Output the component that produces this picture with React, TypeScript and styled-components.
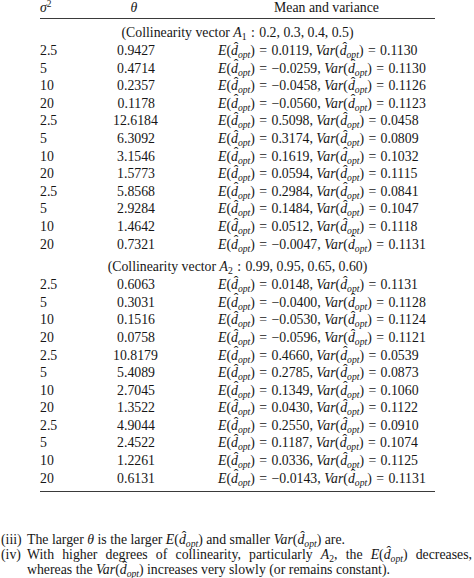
import React from 'react';
import styled, { createGlobalStyle } from 'styled-components';

const GlobalStyle = createGlobalStyle`
  html, body {
    margin: 0;
    padding: 0;
    background: #ffffff;
  }
  body {
    width: 474px;
    height: 578px;
    overflow: hidden;
    font-family: 'Liberation Serif', 'Times New Roman', serif;
    font-size: 13.8px;
    color: #161616;
  }
`;

const Page = styled.div`
  width: 474px;
  height: 578px;
  display: flex;
  flex-direction: column;
`;

const Table = styled.table`
  margin-left: 40px;
  width: 395px;
  border-collapse: collapse;
  table-layout: fixed;
  border-bottom: 1.5px solid #3a3a3a;
`;

const Col = styled.col<{ $w: number }>`
  width: ${(p) => p.$w}px;
`;

const HeadCell = styled.th<{ $align?: 'left' | 'center' | 'right'; $pad?: number }>`
  font-weight: normal;
  text-align: ${(p) => p.$align ?? 'left'};
  line-height: 16px;
  padding: 0 0 2px ${(p) => p.$pad ?? 0}px;
  border-bottom: 1.5px solid #3a3a3a;
  white-space: nowrap;
`;

const GroupCell = styled.td`
  text-align: center;
  line-height: 18px;
  padding: 5px 0 0;
  white-space: nowrap;
`;

const Cell = styled.td<{ $align?: 'left' | 'right'; $pad?: number; $last?: boolean }>`
  text-align: ${(p) => p.$align ?? 'left'};
  height: 17.6px;
  line-height: 17.6px;
  padding: 0 0 ${(p) => (p.$last ? 4 : 0)}px ${(p) => p.$pad ?? 0}px;
  white-space: nowrap;
  vertical-align: top;
`;

const It = styled.span`
  font-style: italic;
`;

const Sup = styled.sup`
  font-size: 0.68em;
  line-height: 0;
  vertical-align: 0.5em;
`;

const Sub = styled.sub<{ $italic?: boolean }>`
  font-size: 0.7em;
  line-height: 0;
  vertical-align: -0.34em;
  font-style: ${(p) => (p.$italic ? 'italic' : 'normal')};
`;

/* the circumflex sits over the italic d */
const Hat = styled.span`
  position: relative;
  font-style: italic;

  &::before {
    content: 'ˆ';
    position: absolute;
    left: 0.2em;
    top: -0.17em;
    line-height: 1em;
    font-style: normal;
  }
`;

const Rel = styled.span`
  margin: 0 0.32em;
`;

const NoteList = styled.div`
  margin-top: 40px;
  display: grid;
  grid-template-columns: 27px 445px;
  line-height: 15px;
`;

const NoteLabel = styled.span`
  padding-left: 1px;
`;

const NoteText = styled.p`
  margin: 0;
  text-align: justify;
`;

const Dopt = () => (
  <>
    <Hat>d</Hat>
    <Sub $italic>opt</Sub>
  </>
);

const Expr = ({ mean, variance }: { mean: string; variance: string }) => (
  <>
    <It>E</It>(<Dopt />)<Rel>=</Rel>
    {mean}, <It>Var</It>(<Dopt />)<Rel>=</Rel>
    {variance}
  </>
);

type Row = [string, string, string, string];

const groupA1: Row[] = [
  ['2.5', '0.9427', '0.0119', '0.1130'],
  ['5', '0.4714', '−0.0259', '0.1130'],
  ['10', '0.2357', '−0.0458', '0.1126'],
  ['20', '0.1178', '−0.0560', '0.1123'],
  ['2.5', '12.6184', '0.5098', '0.0458'],
  ['5', '6.3092', '0.3174', '0.0809'],
  ['10', '3.1546', '0.1619', '0.1032'],
  ['20', '1.5773', '0.0594', '0.1115'],
  ['2.5', '5.8568', '0.2984', '0.0841'],
  ['5', '2.9284', '0.1484', '0.1047'],
  ['10', '1.4642', '0.0512', '0.1118'],
  ['20', '0.7321', '−0.0047', '0.1131'],
];

const groupA2: Row[] = [
  ['2.5', '0.6063', '0.0148', '0.1131'],
  ['5', '0.3031', '−0.0400', '0.1128'],
  ['10', '0.1516', '−0.0530', '0.1124'],
  ['20', '0.0758', '−0.0596', '0.1121'],
  ['2.5', '10.8179', '0.4660', '0.0539'],
  ['5', '5.4089', '0.2785', '0.0873'],
  ['10', '2.7045', '0.1349', '0.1060'],
  ['20', '1.3522', '0.0430', '0.1122'],
  ['2.5', '4.9044', '0.2550', '0.0910'],
  ['5', '2.4522', '0.1187', '0.1074'],
  ['10', '1.2261', '0.0336', '0.1125'],
  ['20', '0.6131', '−0.0143', '0.1131'],
];

const DataRows = ({ rows, last }: { rows: Row[]; last?: boolean }) => (
  <>
    {rows.map(([sigma, theta, mean, variance], i) => {
      const isLast = !!last && i === rows.length - 1;
      return (
        <tr key={i}>
          <Cell $last={isLast}>{sigma}</Cell>
          <Cell $align="right" $last={isLast}>
            {theta}
          </Cell>
          <Cell $pad={63} $last={isLast}>
            <Expr mean={mean} variance={variance} />
          </Cell>
        </tr>
      );
    })}
  </>
);

export default function App() {
  return (
    <Page>
      <GlobalStyle />
      <Table>
        <colgroup>
          <Col $w={73} />
          <Col $w={42} />
          <Col $w={280} />
        </colgroup>
        <thead>
          <tr>
            <HeadCell>
              <It>σ</It>
              <Sup>2</Sup>
            </HeadCell>
            <HeadCell $align="center">
              <It>θ</It>
            </HeadCell>
            <HeadCell $align="center" $pad={63}>
              Mean and variance
            </HeadCell>
          </tr>
        </thead>
        <tbody>
          <tr>
            <GroupCell colSpan={3}>
              (Collinearity vector <It>A</It>
              <Sub>1</Sub>
              <Rel>:</Rel>0.2, 0.3, 0.4, 0.5)
            </GroupCell>
          </tr>
          <DataRows rows={groupA1} />
          <tr>
            <GroupCell colSpan={3}>
              (Collinearity vector <It>A</It>
              <Sub>2</Sub>
              <Rel>:</Rel>0.99, 0.95, 0.65, 0.60)
            </GroupCell>
          </tr>
          <DataRows rows={groupA2} last />
        </tbody>
      </Table>
      <NoteList>
        <NoteLabel>(iii)</NoteLabel>
        <NoteText>
          The larger <It>θ</It> is the larger <It>E</It>(<Dopt />) and smaller <It>Var</It>(<Dopt />) are.
        </NoteText>
        <NoteLabel>(iv)</NoteLabel>
        <NoteText>
          With higher degrees of collinearity, particularly <It>A</It>
          <Sub>2</Sub>, the <It>E</It>(<Dopt />) decreases, whereas the <It>Var</It>(<Dopt />) increases very
          slowly (or remains constant).
        </NoteText>
      </NoteList>
    </Page>
  );
}
